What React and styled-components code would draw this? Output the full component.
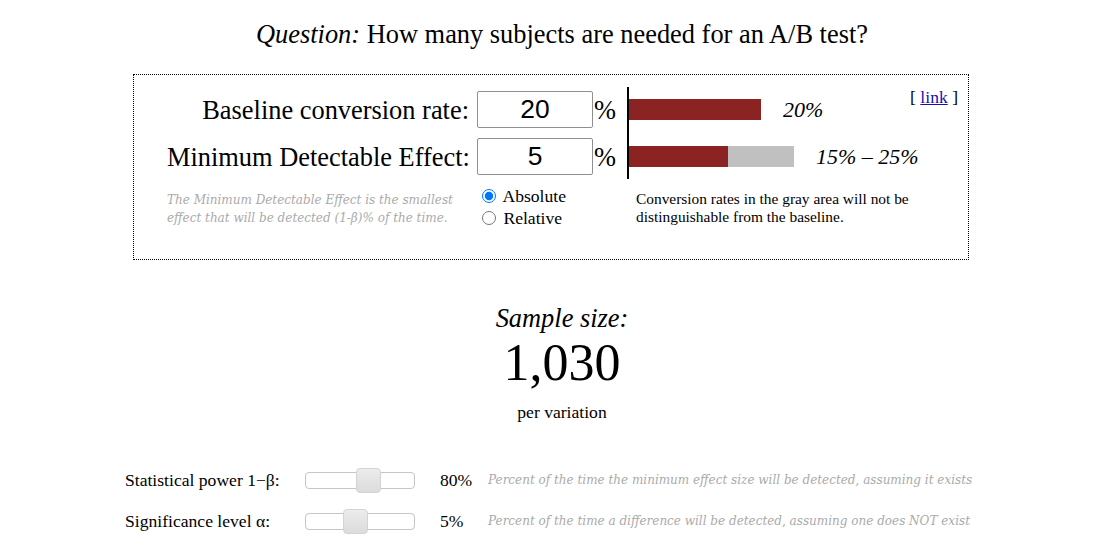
import React from "react";
import styled, { createGlobalStyle } from "styled-components";

const Global = createGlobalStyle`
  html, body { margin: 0; padding: 0; background: #fff; }
  body { font-family: "Liberation Serif", "Times New Roman", serif; color: #000; }
`;

const Page = styled.div`
  width: 1109px;
  padding-left: 15px;
  box-sizing: border-box;
`;

const Title = styled.h1`
  margin: 19px 0 0;
  font-size: 26.4px;
  font-weight: normal;
  line-height: 30px;
  text-align: center;
  em { font-style: italic; }
`;

const Box = styled.div`
  margin: 25px 0 0 118px;
  width: 836px;
  box-sizing: border-box;
  border: 1px dotted #000;
  padding: 16px 10px 30px 33px;
  display: grid;
  grid-template-columns: 310px 117px 33px minmax(0, 1fr);
  grid-template-rows: 37px 37px auto;
  row-gap: 10px;
`;

const Label = styled.label`
  font-size: 26.4px;
  text-align: right;
  padding-right: 8px;
  align-self: center;
  white-space: nowrap;
  line-height: 30px;
`;

const NumInput = styled.input`
  width: 116px;
  height: 37px;
  box-sizing: border-box;
  border: 1px solid #8f8f8f;
  border-radius: 2px;
  font-family: "Liberation Sans", Arial, sans-serif;
  font-size: 26.4px;
  text-align: center;
  padding: 0;
  color: #000;
`;

const Pct = styled.span`
  font-size: 26.4px;
  align-self: center;
  line-height: 30px;
`;

const ChartCell = styled.div`
  grid-column: 4;
  grid-row: 1 / 3;
  margin: -4px 0;
  display: flex;
  align-items: flex-start;
  min-width: 0;
`;

const Chart = styled.div`
  flex: 1;
  min-width: 0;
  border-left: 2px solid #000;
  padding: 4px 0;
  display: grid;
  grid-template-rows: 37px 37px;
  row-gap: 10px;
`;

const BarRow = styled.div`
  display: flex;
  align-items: center;
`;

const Bar = styled.div`
  flex-shrink: 0;
  height: 21px;
  background: ${(p) => (p.$gray ? "#c0c0c0" : "#8b2323")};
`;

const BarLabel = styled.span`
  font-style: italic;
  font-size: 22px;
  margin-left: 22px;
  line-height: 26px;
  white-space: nowrap;
`;

const LinkWrap = styled.span`
  flex-shrink: 0;
  font-size: 17.6px;
  line-height: 20px;
  white-space: nowrap;
  a { color: #1a0dab; }
`;

const Hint = styled.div`
  grid-column: 1;
  grid-row: 3;
  font-family: "DejaVu Serif", Georgia, serif;
  font-style: italic;
  font-size: 12px;
  line-height: 18px;
  color: #aaa;
  padding-top: 6px;
  width: 300px;
`;

const Radios = styled.div`
  grid-column: 2 / 4;
  grid-row: 3;
  font-size: 17.6px;
  line-height: 22px;
  white-space: nowrap;
  input {
    width: 14px;
    height: 14px;
    margin: 0 3px 0 5px;
    vertical-align: -1px;
  }
`;

const Note = styled.div`
  grid-column: 4;
  grid-row: 3;
  padding: 5px 0 0 9px;
  font-size: 15.4px;
  line-height: 18px;
  width: 300px;
`;

const Result = styled.div`
  margin-top: 43px;
  text-align: center;
`;

const ResultTitle = styled.div`
  font-style: italic;
  font-size: 26.4px;
  line-height: 30px;
`;

const ResultNum = styled.div`
  font-size: 52px;
  line-height: 60px;
`;

const ResultSub = styled.div`
  font-size: 17.6px;
  line-height: 20px;
  margin-top: 9px;
`;

const Settings = styled.div`
  margin: 45px 0 0 110px;
  display: grid;
  grid-template-columns: 180px 110px 48px auto;
  row-gap: 15px;
  align-items: center;
`;

const SetLabel = styled.div`
  font-size: 17.6px;
  line-height: 26px;
`;

const Track = styled.div`
  position: relative;
  width: 110px;
  height: 17px;
  box-sizing: border-box;
  border: 1px solid #c5c5c5;
  border-radius: 4px;
  background: #fff;
`;

const Handle = styled.div`
  position: absolute;
  top: -5px;
  width: 25px;
  height: 25px;
  box-sizing: border-box;
  border: 1px solid #d3d3d3;
  border-radius: 4px;
  background: linear-gradient(#ececec, #e3e3e3 50%, #dcdcdc);
`;

const SetValue = styled.div`
  font-size: 17.6px;
  line-height: 26px;
  margin-left: 25px;
`;

const SetHint = styled.div`
  font-family: "DejaVu Serif", Georgia, serif;
  font-style: italic;
  font-size: 12px;
  color: #aaa;
  margin-left: 25px;
  white-space: nowrap;
`;

export default function App() {
  return (
    <>
      <Global />
      <Page>
        <Title>
          <em>Question:</em> How many subjects are needed for an A/B test?
        </Title>
        <Box>
          <Label style={{ gridRow: 1 }}>Baseline conversion rate:</Label>
          <NumInput style={{ gridRow: 1 }} defaultValue="20" />
          <Pct style={{ gridRow: 1 }}>%</Pct>
          <Label style={{ gridRow: 2 }}>Minimum Detectable Effect:</Label>
          <NumInput style={{ gridRow: 2 }} defaultValue="5" />
          <Pct style={{ gridRow: 2 }}>%</Pct>
          <ChartCell>
            <Chart>
              <BarRow>
                <Bar style={{ width: 132 }} />
                <BarLabel>20%</BarLabel>
              </BarRow>
              <BarRow>
                <Bar style={{ width: 99 }} />
                <Bar $gray style={{ width: 66 }} />
                <BarLabel>15% – 25%</BarLabel>
              </BarRow>
            </Chart>
            <LinkWrap>
              [ <a href="#">link</a> ]
            </LinkWrap>
          </ChartCell>
          <Hint>
            The Minimum Detectable Effect is the smallest effect that will be
            detected (1-β)% of the time.
          </Hint>
          <Radios>
            <div>
              <input type="radio" name="mde" defaultChecked /> Absolute
            </div>
            <div>
              <input type="radio" name="mde" /> Relative
            </div>
          </Radios>
          <Note>
            Conversion rates in the gray area will not be distinguishable from
            the baseline.
          </Note>
        </Box>
        <Result>
          <ResultTitle>Sample size:</ResultTitle>
          <ResultNum>1,030</ResultNum>
          <ResultSub>per variation</ResultSub>
        </Result>
        <Settings>
          <SetLabel>Statistical power 1−β:</SetLabel>
          <Track>
            <Handle style={{ left: 50 }} />
          </Track>
          <SetValue>80%</SetValue>
          <SetHint>
            Percent of the time the minimum effect size will be detected,
            assuming it exists
          </SetHint>
          <SetLabel>Significance level α:</SetLabel>
          <Track>
            <Handle style={{ left: 37 }} />
          </Track>
          <SetValue>5%</SetValue>
          <SetHint>
            Percent of the time a difference will be detected, assuming one
            does NOT exist
          </SetHint>
        </Settings>
      </Page>
    </>
  );
}
